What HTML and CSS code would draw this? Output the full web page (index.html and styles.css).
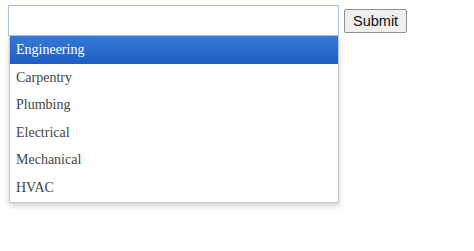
FILE: index.html
```html
<!DOCTYPE html>
<html lang="en">
  <head>
    <meta charset="UTF-8" />
    <title>Trade search</title>
    <link rel="stylesheet" href="styles.css">
  </head>
  <body>
    <form class="search">
      <div class="field">
        <input type="text" class="search-input" />
        <ul class="suggestions">
          <li class="active">Engineering</li>
          <li>Carpentry</li>
          <li>Plumbing</li>
          <li>Electrical</li>
          <li>Mechanical</li>
          <li>HVAC</li>
        </ul>
      </div>
      <button type="button" class="submit">Submit</button>
    </form>
  </body>
</html>
```

FILE: styles.css
```css
* {
  margin: 0;
  padding: 0;
  box-sizing: border-box;
}
html,
body {
  width: 100%;
  height: 100%;
}
body {
  background: #fff;
}

/* SEARCH FORM */
.search {
  display: flex;
  align-items: flex-start;
  gap: 5px;
  padding: 5px 8px;
}
.field {
  display: flex;
  flex-direction: column;
}
.search-input {
  display: block;
  width: 331px;
  height: 31px;
  border: 1px solid #a9c6e6;
  border-top-color: #9bbbe0;
  background: #fff;
  outline: none;
  font-family: "Liberation Serif", serif;
  font-size: 14px;
  padding: 0 6px;
}
.submit {
  height: 24px;
  margin-top: 4px;
  padding: 0 8px;
  font-family: "Liberation Sans", Arial, sans-serif;
  font-size: 14.5px;
  color: #111;
  background: #efefef;
  border: 1px solid #8f8f8f;
  border-radius: 2px;
}

/* SUGGESTIONS */
.suggestions {
  margin-left: 1px;
  width: 330px;
  list-style: none;
  background: #fff;
  border: 1px solid #c8c8c8;
  border-top: none;
  box-shadow: 0 3px 6px rgba(0, 0, 0, 0.18);
}
.suggestions li {
  height: 27.6px;
  line-height: 28px;
  padding-left: 6px;
  font-family: "Liberation Serif", serif;
  font-size: 14px;
  color: #444;
}
.suggestions li.active {
  background: linear-gradient(#3879d6, #1e5dc2);
  color: #fff;
}
```
